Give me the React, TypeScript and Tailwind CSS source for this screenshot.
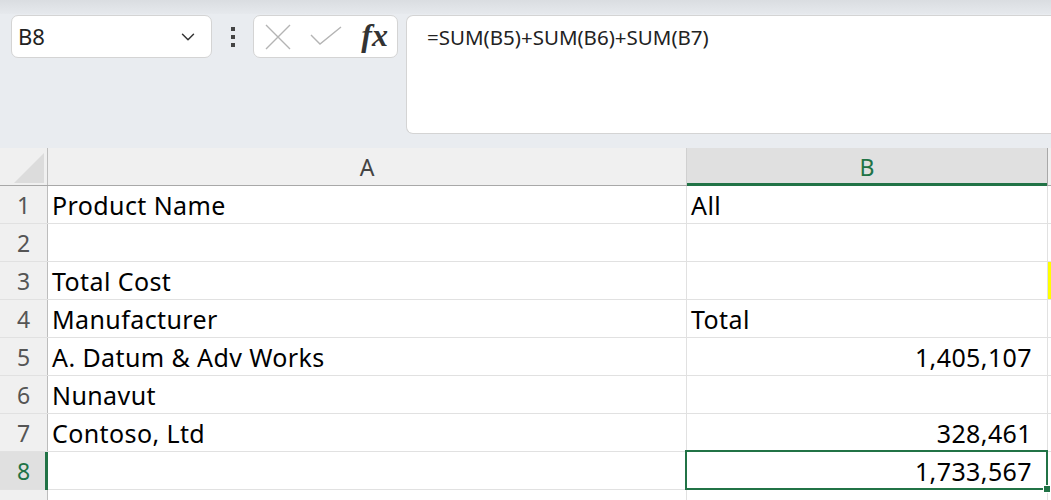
import { ChevronDown } from "lucide-react";

type Row = { n: number; a: string; b: string; right?: boolean };

const rows: Row[] = [
  { n: 1, a: "Product Name", b: "All" },
  { n: 2, a: "", b: "" },
  { n: 3, a: "Total Cost", b: "" },
  { n: 4, a: "Manufacturer", b: "Total" },
  { n: 5, a: "A. Datum & Adv Works", b: "1,405,107", right: true },
  { n: 6, a: "Nunavut", b: "" },
  { n: 7, a: "Contoso, Ltd", b: "328,461", right: true },
  { n: 8, a: "", b: "1,733,567", right: true },
];

const font = { fontFamily: '"Noto Sans", "Open Sans", sans-serif' };

function FormulaBar() {
  return (
    <div className="flex items-start h-[134px] pt-[15px] pl-[11px]">
      {/* name box */}
      <div className="w-[201px] h-[43px] bg-white border border-[#d4d4d4] rounded-[7px] flex items-center pl-[6px] pr-[12px]">
        <span className="flex-1 text-[22px] text-[#222]">B8</span>
        <ChevronDown size={22} strokeWidth={1.6} className="text-[#333]" />
      </div>
      {/* more dots */}
      <div className="w-[41px] h-[43px] flex flex-col items-center justify-center gap-[4px]">
        <div className="w-[4px] h-[4px] bg-[#444]" />
        <div className="w-[4px] h-[4px] bg-[#444]" />
        <div className="w-[4px] h-[4px] bg-[#444]" />
      </div>
      {/* cancel / enter / fx */}
      <div className="w-[145px] h-[43px] bg-white border border-[#d4d4d4] rounded-[7px] flex items-center pl-[11px] pr-[9px] justify-between">
        <svg width="26" height="26" viewBox="0 0 26 26">
          <path d="M1 1 L25 25 M25 1 L1 25" stroke="#b4b4b4" strokeWidth="1.4" fill="none" />
        </svg>
        <svg width="32" height="22" viewBox="0 0 32 22">
          <path d="M1 9 L10 18 L31 1" stroke="#b4b4b4" strokeWidth="1.4" fill="none" />
        </svg>
        <span
          className="text-[32px] italic font-semibold text-[#333] leading-none -mt-[4px]"
          style={{ fontFamily: '"Liberation Serif", serif' }}
        >
          fx
        </span>
      </div>
      {/* formula input */}
      <div className="ml-[8px] flex-1 h-[119px] bg-white border border-[#d4d4d4] border-r-0 rounded-l-[7px] pl-[20px] pt-[6px]">
        <span className="text-[20.5px] text-[#222]">=SUM(B5)+SUM(B6)+SUM(B7)</span>
      </div>
    </div>
  );
}

function Header() {
  return (
    <div className="flex h-[38px] border-b border-[#a8a8a8] text-[23px] text-[#444]">
      <div className="w-[48px] bg-[#f0f0f0] border-r border-[#bdbdbd] flex items-end justify-end pb-[2px] pr-[3px]">
        <div className="w-0 h-0 border-l-[30px] border-l-transparent border-b-[30px] border-b-[#dcdcdc]" />
      </div>
      <div className="w-[639px] bg-[#f0f0f0] border-r border-[#d0d0d0] flex items-center justify-center pt-[2px]">
        A
      </div>
      <div className="relative w-[361px] bg-[#e0e0e0] border-r border-[#a8a8a8] flex items-center justify-center pt-[2px] text-[#217346]">
        B
        <div className="absolute left-0 right-0 -bottom-[1px] h-[3px] bg-[#217346]" />
      </div>
      <div className="flex-1 bg-[#f0f0f0]" />
    </div>
  );
}

function GridRow({ row }: { row: Row }) {
  const selected = row.n === 8;
  return (
    <div className="flex h-[38px] border-b border-[#e1e1e1] text-[25px] tracking-[0.4px] text-black">
      <div
        className={
          selected
            ? "relative w-[48px] bg-[#e0e0e0] border-r border-[#bdbdbd] flex items-center justify-center pt-[2px] text-[23px] tracking-normal text-[#217346]"
            : "w-[48px] bg-[#f0f0f0] border-r border-[#bdbdbd] flex items-center justify-center pt-[2px] text-[23px] tracking-normal text-[#555]"
        }
      >
        {row.n}
        {selected && <div className="absolute top-0 -bottom-[1px] -right-[1px] w-[3px] bg-[#217346]" />}
      </div>
      <div className="w-[639px] border-r border-[#e1e1e1] flex items-center pt-[2px] pl-[4px]">{row.a}</div>
      <div
        className={
          "relative w-[361px] border-r border-[#e1e1e1] flex items-center pt-[2px] " +
          (row.right ? "justify-end pr-[15px]" : "pl-[4px]")
        }
      >
        {row.b}
        {selected && (
          <>
            <div className="absolute -top-[2px] -left-[2px] -right-[1px] bottom-[-1px] border-2 border-[#217346]" />
            <div className="absolute -right-[4px] -bottom-[4px] w-[8px] h-[8px] bg-[#217346] border border-white" />
          </>
        )}
      </div>
      <div className={row.n === 3 ? "flex-1 bg-[#ffff00]" : "flex-1"} />
    </div>
  );
}

export default function App() {
  return (
    <div className="w-[1051px] h-[500px] overflow-hidden bg-[#e9ecf0]" style={font}>
      <div className="h-[14px] bg-gradient-to-b from-[#dadde1] to-[#e6e9ed]" />
      <div className="-mt-[14px]">
        <FormulaBar />
      </div>
      <div className="mt-[14px] bg-white">
        <Header />
        {rows.map((r) => (
          <GridRow key={r.n} row={r} />
        ))}
        <div className="flex h-[20px]">
          <div className="w-[48px] bg-[#f0f0f0] border-r border-[#bdbdbd]" />
          <div className="w-[639px] border-r border-[#e1e1e1]" />
          <div className="w-[361px] border-r border-[#e1e1e1]" />
        </div>
      </div>
    </div>
  );
}
